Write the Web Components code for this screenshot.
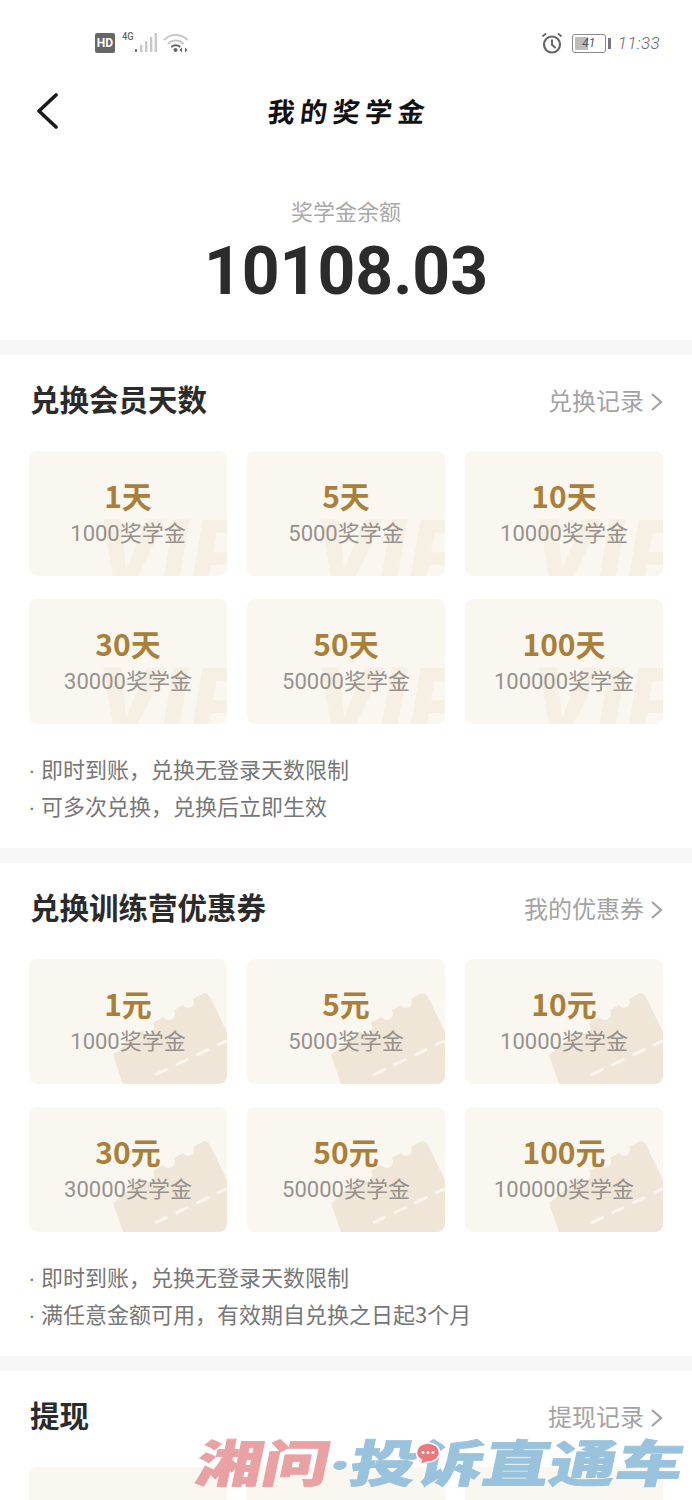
<!DOCTYPE html>
<html lang="zh">
<head>
<meta charset="utf-8">
<title>我的奖学金</title>
<style>
  html, body {
    margin: 0;
    height: 1500px;
    overflow: hidden;
    background: #fff;
    font-family: Roboto, "Noto Sans CJK SC", sans-serif;
  }
  #app { position: relative; height: 1500px; overflow: hidden; }
</style>
</head>
<body>
<div id="app">
  <status-bar></status-bar>
  <nav-bar>我的奖学金</nav-bar>
  <balance-panel label="奖学金余额">10108.03</balance-panel>

  <exchange-section heading="兑换会员天数" link="兑换记录">
    <reward-card kind="vip"><span slot="value">1天</span>1000奖学金</reward-card>
    <reward-card kind="vip"><span slot="value">5天</span>5000奖学金</reward-card>
    <reward-card kind="vip"><span slot="value">10天</span>10000奖学金</reward-card>
    <reward-card kind="vip"><span slot="value">30天</span>30000奖学金</reward-card>
    <reward-card kind="vip"><span slot="value">50天</span>50000奖学金</reward-card>
    <reward-card kind="vip"><span slot="value">100天</span>100000奖学金</reward-card>
    <note-line slot="notes">即时到账，兑换无登录天数限制</note-line>
    <note-line slot="notes">可多次兑换，兑换后立即生效</note-line>
  </exchange-section>

  <exchange-section heading="兑换训练营优惠券" link="我的优惠券">
    <reward-card kind="ticket"><span slot="value">1元</span>1000奖学金</reward-card>
    <reward-card kind="ticket"><span slot="value">5元</span>5000奖学金</reward-card>
    <reward-card kind="ticket"><span slot="value">10元</span>10000奖学金</reward-card>
    <reward-card kind="ticket"><span slot="value">30元</span>30000奖学金</reward-card>
    <reward-card kind="ticket"><span slot="value">50元</span>50000奖学金</reward-card>
    <reward-card kind="ticket"><span slot="value">100元</span>100000奖学金</reward-card>
    <note-line slot="notes">即时到账，兑换无登录天数限制</note-line>
    <note-line slot="notes">满任意金额可用，有效期自兑换之日起3个月</note-line>
  </exchange-section>

  <exchange-section heading="提现" link="提现记录">
    <reward-card><span slot="value">1元</span></reward-card>
    <reward-card><span slot="value">5元</span></reward-card>
    <reward-card><span slot="value">10元</span></reward-card>
  </exchange-section>

  <water-mark></water-mark>
</div>

<script>
// Status bar, icons are drawn by hand
class StatusBar extends HTMLElement {
  constructor() {
    super();
    this.attachShadow({ mode: 'open' });
    this.shadowRoot.innerHTML = `
      <style>
        :host {
          display: flex;
          justify-content: space-between;
          align-items: center;
          box-sizing: border-box;
          height: 72px;
          padding: 14px 32px 0 95px;
          color: #666;
        }
        .group { display: flex; align-items: center; }
        .hd {
          width: 20px;
          height: 20px;
          border-radius: 2px;
          background: #666;
          color: #fff;
          font: 700 12px/20px "Roboto", sans-serif;
          text-align: center;
        }
        .net {
          align-self: flex-start;
          margin: -2px 0 0 7px;
          width: 13px;
          font: 500 11px/12px "Roboto", sans-serif;
          transform: scaleX(.85);
          transform-origin: left;
        }
        .wifi { margin-left: 6px; }
        .alarm { margin-right: 9px; }
        .battery {
          position: relative;
          box-sizing: border-box;
          width: 34px;
          height: 19px;
          border: 1px solid #8a8a8a;
          border-radius: 3px;
          padding: 2px;
        }
        .battery i {
          display: block;
          width: 13px;
          height: 100%;
          background: #bdbdbd;
        }
        .battery span {
          position: absolute;
          left: 0;
          right: 0;
          top: 0;
          text-align: center;
          font: italic 400 12px/17px "Roboto", sans-serif;
          color: #555;
        }
        .tip { width: 3px; height: 11px; margin-left: 2px; background: #777; }
        .time {
          margin-left: 7px;
          font: italic 300 17px/20px "Roboto", sans-serif;
          letter-spacing: .4px;
          color: #666;
        }
      </style>
      <div class="group">
        <div class="hd">HD</div>
        <div class="net">4G</div>
        <svg class="signal" width="22" height="20" viewBox="0 0 22 20">
          <rect x="0" y="16" width="2" height="3" fill="#777"/>
          <rect x="5" y="12" width="2.4" height="7" fill="#c8c8c8"/>
          <rect x="10" y="8" width="2.4" height="11" fill="#c8c8c8"/>
          <rect x="15" y="4" width="2.4" height="15" fill="#c8c8c8"/>
          <rect x="19.6" y="0" width="2.4" height="19" fill="#c8c8c8"/>
        </svg>
        <svg class="wifi" width="26" height="20" viewBox="0 0 26 20" fill="none" stroke-linecap="round">
          <path d="M1.5 6.5C7.5 .6 18 .6 24 6.5" stroke="#c8c8c8" stroke-width="2"/>
          <path d="M5.5 10.5C9.5 6.6 16 6.6 20 10.5" stroke="#c8c8c8" stroke-width="2"/>
          <path d="M9 13.6C11 11.9 14.6 11.9 16.6 13.6" stroke="#666" stroke-width="2"/>
          <circle cx="12.5" cy="17" r="2" fill="#666"/>
          <path d="M19 14.5l-2.5 2.5 2.5 2.5zM22 14.5l2.5 2.5-2.5 2.5z" fill="#666"/>
        </svg>
      </div>
      <div class="group">
        <svg class="alarm" width="22" height="22" viewBox="0 0 22 22" fill="none" stroke="#666">
          <circle cx="11" cy="12.5" r="8" stroke-width="2.2"/>
          <path d="M11 7.5v5.2l3.6 3.4" stroke-width="2"/>
          <path d="M1.5 4.5L5 1.5M20.5 4.5L17 1.5" stroke-width="1.8"/>
        </svg>
        <div class="battery"><i></i><span>41</span></div>
        <div class="tip"></div>
        <div class="time">11:33</div>
      </div>
    `;
  }
}

// Top bar with back arrow
class NavBar extends HTMLElement {
  constructor() {
    super();
    this.attachShadow({ mode: 'open' });
    this.shadowRoot.innerHTML = `
      <style>
        :host {
          display: grid;
          grid-template-columns: 1fr auto 1fr;
          align-items: center;
          height: 78px;
          padding: 0 36px;
          color: #111;
        }
        svg { display: block; }
        .title {
          font: 700 27px/78px "Noto Sans CJK SC", sans-serif;
          letter-spacing: 5.5px;
          margin-right: -5.5px;
          transform: skewX(-6deg);
        }
      </style>
      <svg width="22" height="36" viewBox="0 0 22 36" fill="none">
        <path d="M20 2L3 18l17 16" stroke="#1a1a1a" stroke-width="3.6" stroke-linecap="round" stroke-linejoin="round"/>
      </svg>
      <div class="title"><slot></slot></div>
    `;
  }
}

class BalancePanel extends HTMLElement {
  constructor() {
    super();
    this.attachShadow({ mode: 'open' });
    this.shadowRoot.innerHTML = `
      <style>
        :host {
          display: block;
          height: 190px;
          box-sizing: border-box;
          padding-top: 45px;
          text-align: center;
        }
        .label {
          font: 400 22px/30px "Noto Sans CJK SC", sans-serif;
          color: #a9a9a9;
        }
        .amount {
          margin-top: 7px;
          font: 700 66px/80px Roboto, sans-serif;
          color: #2b2b2b;
        }
      </style>
      <div class="label">${this.getAttribute('label')}</div>
      <div class="amount"><slot></slot></div>
    `;
  }
}

// One block of the page: heading, link, grid of cards, notes
class ExchangeSection extends HTMLElement {
  constructor() {
    super();
    this.attachShadow({ mode: 'open' });
    this.shadowRoot.innerHTML = `
      <style>
        :host {
          display: block;
          border-top: 15px solid #f7f7f7;
          padding: 22px 29px 25px;
        }
        header {
          display: flex;
          justify-content: space-between;
          align-items: center;
          height: 46px;
          margin-bottom: 28px;
        }
        h2 {
          margin: 0 0 4px 1px;
          font: 700 29.5px/42px "Noto Sans CJK SC", sans-serif;
          color: #2b2b2b;
        }
        .link {
          display: flex;
          align-items: center;
          gap: 6px;
          font: 400 24px/46px "Noto Sans CJK SC", sans-serif;
          color: #a3a3a3;
        }
        .link svg { margin-top: 3px; }
        .grid {
          display: grid;
          grid-template-columns: repeat(3, 198px);
          grid-auto-rows: 125px;
          gap: 22.5px 20px;
        }
        .notes { margin-top: 26.5px; }
      </style>
      <header>
        <h2>${this.getAttribute('heading')}</h2>
        <div class="link">
          ${this.getAttribute('link')}
          <svg width="13" height="20" viewBox="0 0 13 20" fill="none">
            <path d="M2 2l9 8-9 8" stroke="#a3a3a3" stroke-width="2.2"/>
          </svg>
        </div>
      </header>
      <div class="grid"><slot></slot></div>
      <div class="notes"><slot name="notes"></slot></div>
    `;
  }
}

class RewardCard extends HTMLElement {
  constructor() {
    super();
    this.attachShadow({ mode: 'open' });
    const kind = this.getAttribute('kind');
    let art = '';
    if (kind === 'vip') {
      art = '<div class="vip">VIP</div>';
    } else if (kind === 'ticket') {
      art = `
        <svg class="ticket" width="198" height="125" viewBox="0 0 198 125">
          <path d="M84 96L113 72A6 6 0 0 0 124 64L134 58A6 6 0 0 0 145 51L154 46A5 5 0 0 0 164 40L174 34.500C177 33.500 179 35 181 38L198 73V125H94Z" fill="#efe6d7"/>
          <path d="M126 116L198 81.500" stroke="#f9f6f0" stroke-width="3" stroke-dasharray="14 9"/>
        </svg>`;
    }
    this.shadowRoot.innerHTML = `
      <style>
        :host {
          display: block;
          position: relative;
          overflow: hidden;
          box-sizing: border-box;
          padding-top: 26px;
          border-radius: 8px;
          background: #faf7f1;
          text-align: center;
        }
        .value {
          position: relative;
          font: 700 30px/36px "Noto Sans CJK SC", sans-serif;
          color: #a97f3a;
        }
        .sub {
          position: relative;
          margin-top: 3px;
          font: 400 22px/36px Roboto, "Noto Sans CJK SC", sans-serif;
          color: #96918c;
        }
        .vip {
          position: absolute;
          left: 68px;
          top: 56px;
          font: italic 900 96px/96px Roboto, sans-serif;
          letter-spacing: 2px;
          color: #f6efe3;
          white-space: nowrap;
        }
        .ticket { position: absolute; left: 0; top: 0; }
      </style>
      ${art}
      <div class="value"><slot name="value"></slot></div>
      <div class="sub"><slot></slot></div>
    `;
  }
}

class NoteLine extends HTMLElement {
  constructor() {
    super();
    this.attachShadow({ mode: 'open' });
    this.shadowRoot.innerHTML = `
      <style>
        :host {
          display: flex;
          font: 400 22px/36.5px "Noto Sans CJK SC", sans-serif;
          color: #777;
        }
        .dot { width: 12px; transform: translateY(5px); font-family: Roboto, sans-serif; }
      </style>
      <span class="dot">·</span><slot></slot>
    `;
  }
}

// Publisher's stamp that lies over the bottom of the page
class WaterMark extends HTMLElement {
  constructor() {
    super();
    this.attachShadow({ mode: 'open' });
    this.shadowRoot.innerHTML = `
      <style>
        :host {
          position: absolute;
          left: 197px;
          top: 1432px;
          width: 490px;
          height: 56px;
        }
        .text {
          font: 900 50px/56px "Noto Sans CJK SC", sans-serif;
          white-space: nowrap;
          transform-origin: left center;
          transform: scaleX(1.33) skewX(-9deg);
          -webkit-text-stroke: .8px currentColor;
        }
        .red { color: #e9a1a4; }
        .blue { color: #99c2dd; }
        .dot { color: #99c2dd; font-family: Roboto, sans-serif; }
        svg { position: absolute; left: 218px; top: 10px; }
      </style>
      <div class="text"><span class="red">湘问</span><span class="dot">·</span><span class="blue">投诉直通车</span></div>
      <svg width="26" height="24" viewBox="0 0 26 24">
        <path d="M13 1C6.500 1 1.500 5 1.500 10.500C1.500 14 3.500 16.500 6.500 18L5 23L12 20C19.500 20.500 24.500 16 24.500 10.500C24.500 5 19.500 1 13 1Z" fill="#e9797c" stroke="#fff" stroke-width="1.500"/>
        <circle cx="8" cy="10.500" r="1.500" fill="#fff"/>
        <circle cx="13" cy="10.500" r="1.500" fill="#fff"/>
        <circle cx="18" cy="10.500" r="1.500" fill="#fff"/>
      </svg>
    `;
  }
}

customElements.define('status-bar', StatusBar);
customElements.define('nav-bar', NavBar);
customElements.define('balance-panel', BalancePanel);
customElements.define('exchange-section', ExchangeSection);
customElements.define('reward-card', RewardCard);
customElements.define('note-line', NoteLine);
customElements.define('water-mark', WaterMark);
</script>
</body>
</html>
